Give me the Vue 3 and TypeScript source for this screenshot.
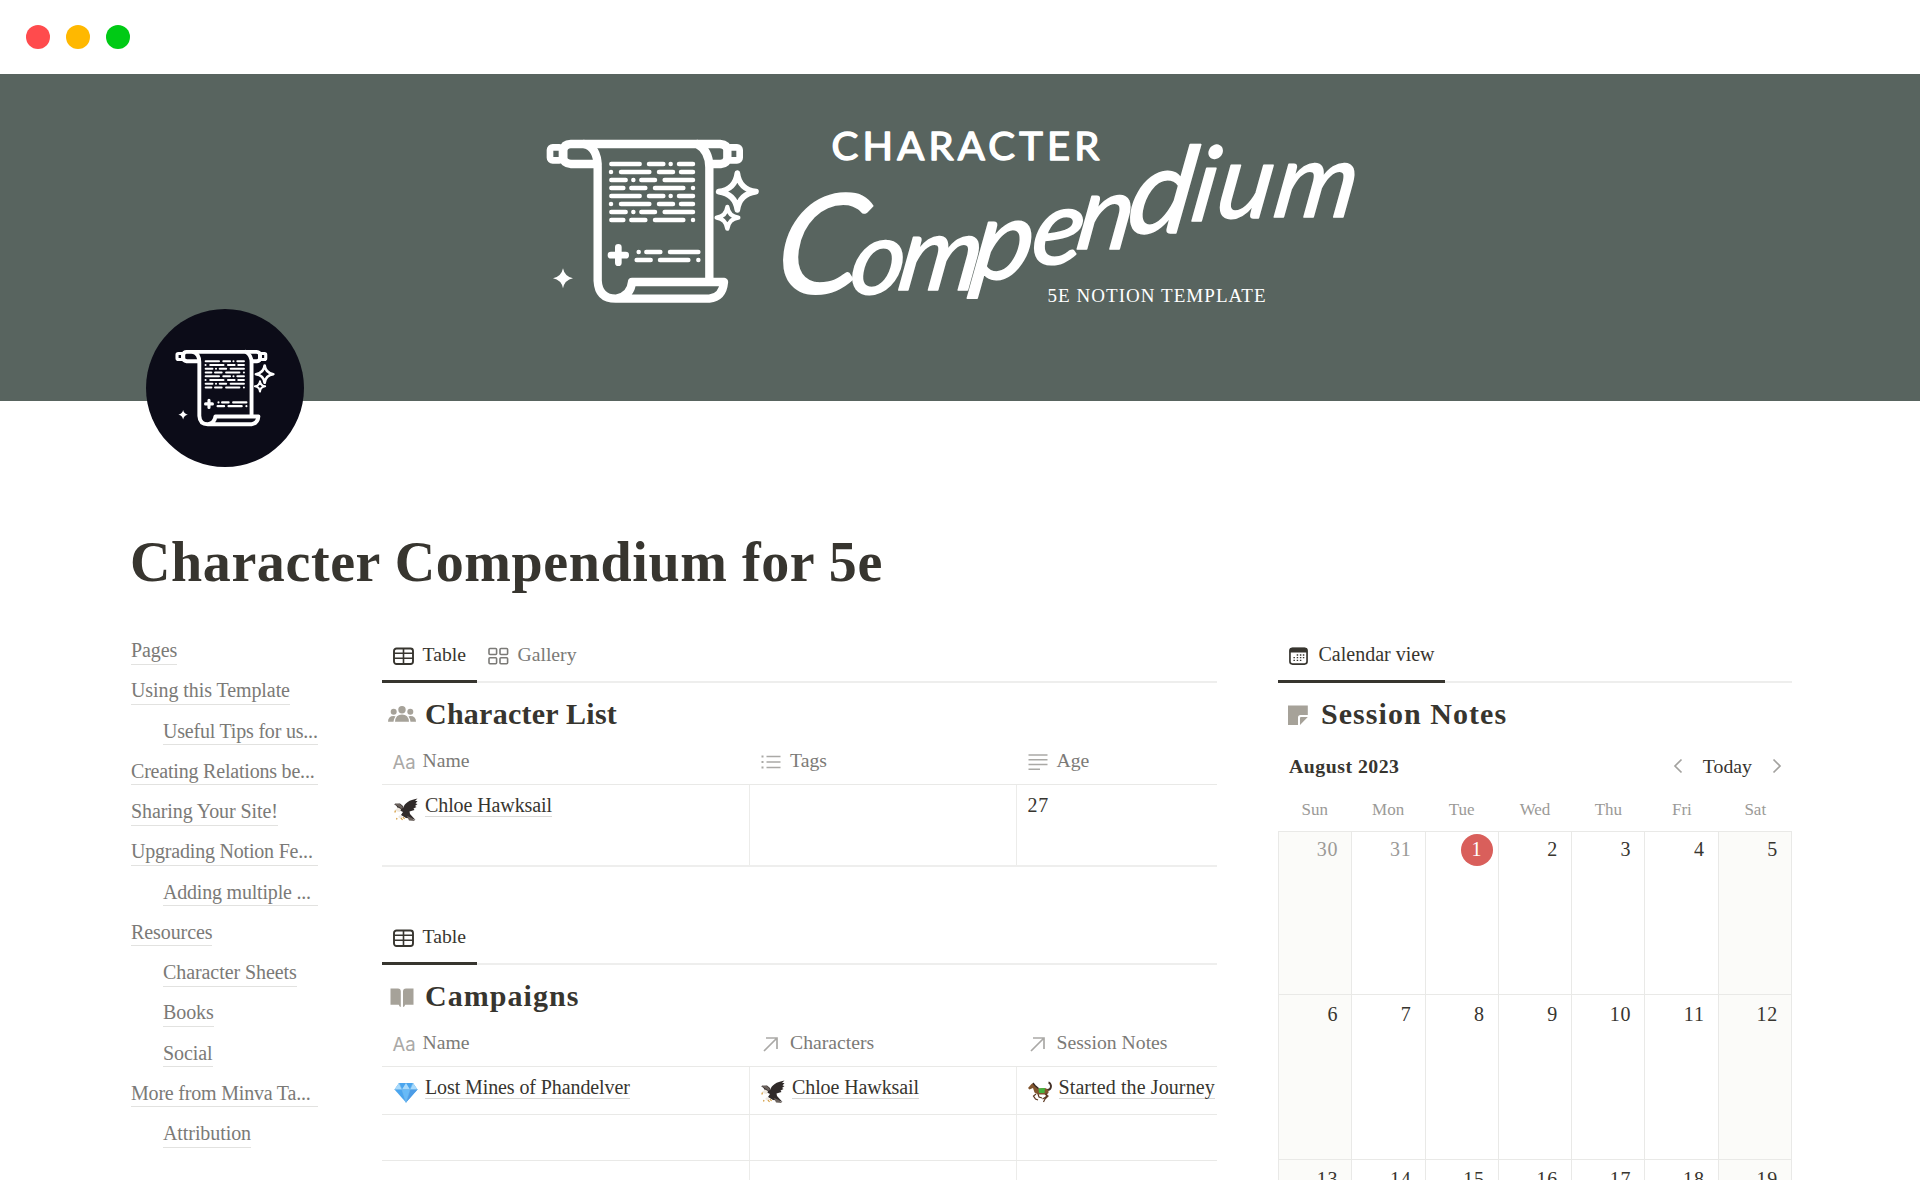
<script setup lang="ts">
interface PageLink {
  label: string
  nested?: boolean
  full?: boolean
}

interface Cell {
  icon?: string
  text?: string
  link?: boolean
}

const pages: PageLink[] = [
  { label: 'Pages' },
  { label: 'Using this Template' },
  { label: 'Useful Tips for us...', nested: true, full: true },
  { label: 'Creating Relations be...', full: true },
  { label: 'Sharing Your Site!' },
  { label: 'Upgrading Notion Fe...', full: true },
  { label: 'Adding multiple ...', nested: true, full: true },
  { label: 'Resources' },
  { label: 'Character Sheets', nested: true },
  { label: 'Books', nested: true },
  { label: 'Social', nested: true },
  { label: 'More from Minva Ta...', full: true },
  { label: 'Attribution', nested: true },
]

const databases = [
  {
    title: 'Character List',
    icon: 'people',
    tabs: ['Table', 'Gallery'],
    columns: [
      { icon: 'title', label: 'Name' },
      { icon: 'list', label: 'Tags' },
      { icon: 'text', label: 'Age' },
    ],
    rows: [
      {
        height: 'tall',
        cells: [{ icon: 'eagle', text: 'Chloe Hawksail', link: true }, {}, { text: '27' }] as Cell[],
      },
    ],
  },
  {
    title: 'Campaigns',
    icon: 'book',
    tabs: ['Table'],
    columns: [
      { icon: 'title', label: 'Name' },
      { icon: 'arrow', label: 'Characters' },
      { icon: 'arrow', label: 'Session Notes' },
    ],
    rows: [
      {
        height: 'mid',
        cells: [
          { icon: 'gem', text: 'Lost Mines of Phandelver', link: true },
          { icon: 'eagle', text: 'Chloe Hawksail', link: true },
          { icon: 'horse', text: 'Started the Journey', link: true },
        ] as Cell[],
      },
      { height: 'short', cells: [{}, {}, {}] as Cell[] },
      { height: 'short', cells: [{}, {}, {}] as Cell[] },
    ],
  },
]

const weekdays = ['Sun', 'Mon', 'Tue', 'Wed', 'Thu', 'Fri', 'Sat']
const weeks = [
  [30, 31, 1, 2, 3, 4, 5],
  [6, 7, 8, 9, 10, 11, 12],
  [13, 14, 15, 16, 17, 18, 19],
]
</script>

<template>
  <div class="window">
    <svg class="defs" width="0" height="0" aria-hidden="true">
      <symbol id="scroll" viewBox="0 0 780 630">
        <g fill="none" stroke="#fff" stroke-linecap="round" stroke-linejoin="round">
          <rect x="90" y="112" width="36" height="39" rx="8" stroke-width="20" />
          <rect x="623" y="112" width="36" height="39" rx="8" stroke-width="20" />
          <path stroke-width="25" d="M232 162H152Q130 158 130 143V121Q132 102 152 102H600Q622 104 622 121V143Q622 160 602 162H570" />
          <path stroke-width="25" d="M192 102Q233 112 233 170V512Q236 566 287 566H568Q608 562 612 516H336Q333 556 290 566" />
          <path stroke-width="25" d="M532 102Q568 122 568 172V514" />
          <g stroke-width="13.5">
            <path d="M274 162H359M387 162H430M452 162h.1M477 162H519M273 186h.1M303 186H388M417 186H459M483 186H519M274 210H317M340 210h.1M364 210H405M434 210H519M274 234H310M334 234H376M405 234H490M519 234h.1" />
            <path d="M274 258H359M387 258H430M452 258h.1M477 258H519M273 282h.1M303 282H388M417 282H459M483 282H519M274 306H317M340 306h.1M364 306H405M434 306H519M274 330H310M334 330H376M405 330H490M519 330h.1" />
            <path d="M356 426h.1M379 426H421M450 426H535M350 450H392M420 450H505M535 450h.1" />
          </g>
          <path stroke-width="20" d="M295 412V458M273 435.500H317" />
          <path stroke-width="17" d="M652 189Q658 238 708 245Q658 252 652 300Q646 252 596 245Q646 238 652 189Z" />
          <path stroke-width="13" d="M622 291Q626 319 655 323Q626 327 622 356Q618 327 590 323Q618 319 622 291Z" />
        </g>
        <path fill="#fff" d="M129 475Q134 500 159 505Q134 510 129 535Q124 510 99 505Q124 500 129 475Z" />
      </symbol>
      <symbol id="table" viewBox="0 0 21 18">
        <rect x="1" y="1.500" width="19" height="15.500" rx="2.500" fill="none" stroke="currentColor" stroke-width="1.900" />
        <path d="M1 6.300H20M1 11.300H20M10.500 2V17" stroke="currentColor" stroke-width="1.600" />
      </symbol>
      <symbol id="gallery" viewBox="0 0 21 18">
        <g fill="none" stroke="currentColor" stroke-width="1.600">
          <rect x="1" y="1.500" width="7.600" height="6" rx="1" />
          <rect x="12" y="1.500" width="7.600" height="6" rx="1" />
          <rect x="1" y="10.800" width="7.600" height="6" rx="1" />
          <rect x="12" y="10.800" width="7.600" height="6" rx="1" />
        </g>
      </symbol>
      <symbol id="calendar" viewBox="0 0 18 18">
        <rect x=".9" y="1.300" width="16.200" height="15.800" rx="2.500" fill="none" stroke="currentColor" stroke-width="1.600" />
        <path d="M.8 5.500V3Q.8.700 3 .7H15Q17.200.7 17.200 3V5.500Z" fill="currentColor" />
        <path d="M7.300 8h1.400M10.300 8h1.400M13.100 8h1.400M4.200 10.700h1.400M7.300 10.700h1.400M10.300 10.700h1.400M13.100 10.700h1.400M4.200 13.400h1.400M7.300 13.400h1.400M10.300 13.400h1.400" stroke="currentColor" stroke-width="1.300" />
      </symbol>
      <symbol id="people" viewBox="0 0 28 20">
        <g fill="#a6a299">
          <circle cx="14" cy="5.700" r="3.700" /><circle cx="5.700" cy="7.700" r="3" /><circle cx="22.300" cy="7.700" r="3" />
          <path d="M7 17.800Q7.500 10.600 14 10.600T21 17.800Z" />
          <path d="M0 17.800Q0 12 5.700 12Q7 12 7.500 12.500Q5.600 15 5.500 17.800Z" />
          <path d="M28 17.800Q28 12 22.300 12Q21 12 20.500 12.500Q22.400 15 22.500 17.800Z" />
        </g>
      </symbol>
      <symbol id="book" viewBox="0 0 24 20">
        <path fill="#a6a299" d="M.5 1.500H8Q10.800 1.500 10.800 4.500V20Q9.500 20 8.800 17.800H.5ZM23.500 1.500H16Q13 1.500 13 4.500V20Q14.500 20 15.200 17.800H23.500Z" />
      </symbol>
      <symbol id="note" viewBox="0 0 20 20">
        <path fill="#a6a299" d="M0 .5H19.800V10H12.500Q10 10 10 12.500V20H0ZM12 20V13Q12 11.900 13 11.900H19.800Z" />
      </symbol>
      <symbol id="list" viewBox="0 0 20 16">
        <path d="M5.500 2.500H19.500M5.500 8H19.500M5.500 13.500H19.500" stroke="#aaa9a6" stroke-width="1.500" />
        <path d="M.5 2.500h2M.5 8h2M.5 13.500h2" stroke="#aaa9a6" stroke-width="2" />
      </symbol>
      <symbol id="text" viewBox="0 0 20 16">
        <path d="M.5 1H19.500M.5 5.800H19.500M.5 10.600H19.500M.5 15.200H12" stroke="#aaa9a6" stroke-width="1.500" />
      </symbol>
      <symbol id="arrow" viewBox="0 0 20 16">
        <path d="M3 15L16 2M5 2H16V13" fill="none" stroke="#aaa9a6" stroke-width="1.700" />
      </symbol>
      <symbol id="eagle" viewBox="0 0 24 24">
        <path fill="#302a29" d="M9 10C11 5 15 2 23.500.5L21 3L23.500 3L21.500 5.500L23.500 6L21 8L22.500 9L19.500 10.500L20.500 12L15.500 13.500L16 16L21.500 22L17 20.500L12 20L7 17L9 14L5 12L2.500 8L0 6L6 5.500L9 8Z" />
        <path fill="#6b625d" d="M1 5.500L6 6L9 9L8 11L5 9L1 6.500ZM13 18L18 20L21 23L15 22.500Z" />
        <path fill="#eee8df" d="M1 12L4 9.500L7 11L6 14L3 13.500ZM4 19L6 17L9 19L7 21Z" />
        <path d="M1.500 12.500L.8 14.500M3 20L2.500 21.500M7 20L8.500 22M9 19L10.500 21" stroke="#d49b3c" stroke-width="1.200" />
      </symbol>
      <symbol id="gem" viewBox="0 0 24 24">
        <path fill="#4aa5ee" d="M5 3H19L23.500 9.500L12 22.500L.5 9.500Z" />
        <path fill="#a9dafb" d="M5 3L8 9.500L.5 9.500ZM19 3L16 9.500L23.500 9.500ZM8 9.500L12 3L16 9.500Z" />
        <path fill="#67baf7" d="M8 9.500H16L12 22.500Z" />
        <path fill="#4c9ce6" d="M16 9.500H23.500L12 22.500Z" />
        <path d="M.5 9.500H23.500M5 3L8 9.500L12 22.500L16 9.500L19 3" fill="none" stroke="#73b9ec" stroke-width=".6" />
      </symbol>
      <symbol id="horse" viewBox="0 0 24 24">
        <path d="M19 10Q23 10 23 6Q22.500 3 20.500 2.500" fill="none" stroke="#443026" stroke-width="1.900" />
        <path fill="#81552e" d="M0 8L3.500 4L5.500 3L6.500 5L10.500 8.500L17 8Q21 9 20.500 13L17.500 14.500L10 14.500L6.500 12.500L5 8L1.500 9.500Z" />
        <path d="M8 14L5.500 16L7.500 19L10 20M10 14L11 17L14 18M17 14L20 16L17 19L15.500 22M19 13L18 17L14.500 19" fill="none" stroke="#5b3922" stroke-width="1.200" />
        <path fill="#44b43e" d="M10.500 8.500L17 8L16.500 13L11 13Z" />
        <path d="M5 3L7 5.500L10.500 8.500" fill="none" stroke="#332620" stroke-width="1.300" />
      </symbol>
    </svg>

    <header class="titlebar">
      <span class="dot red"></span><span class="dot amber"></span><span class="dot green"></span>
    </header>

    <section class="cover">
      <svg class="banner" width="1920" height="327" viewBox="0 74 1920 327">
        <use href="#scroll" x="520" y="110" width="260" height="210" />
        <text class="kicker" x="831.500" y="160" textLength="272" lengthAdjust="spacingAndGlyphs">CHARACTER</text>
        <g transform="translate(0 250) skewX(-9) translate(0 -250)">
          <text
            class="script"
            x="778 854 902 974 1031 1074 1122 1184 1209 1266"
            y="293 294 290 279 264 249 233 221 218 217"
          ><tspan class="initial">C</tspan>om<tspan class="loop">p</tspan><tspan class="bowl">e</tspan>n<tspan class="ascender">d</tspan>ium</text>
        </g>
        <text class="tagline" x="1047.500" y="302" textLength="218" lengthAdjust="spacing">5E NOTION TEMPLATE</text>
      </svg>
      <div class="avatar">
        <svg width="121.600" height="98.200"><use href="#scroll" width="121.600" height="98.200" /></svg>
      </div>
    </section>

    <h1>Character Compendium for 5e</h1>

    <main>
      <nav>
        <div v-for="page in pages" :key="page.label" class="page" :class="{ nested: page.nested }">
          <a :class="{ full: page.full }">{{ page.label }}</a>
        </div>
      </nav>

      <div class="databases">
        <section v-for="db in databases" :key="db.title" class="database">
          <div class="tabs">
            <div v-for="(tab, i) in db.tabs" :key="tab" class="tab" :class="{ active: i === 0 }">
              <svg width="21" height="18"><use :href="'#' + tab.toLowerCase()" /></svg>
              <span>{{ tab }}</span>
            </div>
          </div>
          <h2>
            <svg v-if="db.icon === 'people'" class="people" width="28" height="20"><use href="#people" /></svg>
            <svg v-else class="book" width="24" height="20"><use href="#book" /></svg>
            <span :class="{ roomy: db.icon === 'book' }">{{ db.title }}</span>
          </h2>
          <div class="grid head">
            <div v-for="col in db.columns" :key="col.label" class="th">
              <span v-if="col.icon === 'title'" class="aa">Aa</span>
              <svg v-else width="20" height="16"><use :href="'#' + col.icon" /></svg>
              <span>{{ col.label }}</span>
            </div>
          </div>
          <div v-for="(row, r) in db.rows" :key="r" class="grid row" :class="row.height">
            <div v-for="(cell, c) in row.cells" :key="c" class="td">
              <svg v-if="cell.icon" width="24" height="24"><use :href="'#' + cell.icon" /></svg>
              <a v-if="cell.link">{{ cell.text }}</a>
              <span v-else-if="cell.text" class="num">{{ cell.text }}</span>
            </div>
          </div>
        </section>
      </div>

      <section class="notes">
        <div class="tabs">
          <div class="tab active">
            <svg width="19" height="18" viewBox="0 0 18 18" preserveAspectRatio="none"><use href="#calendar" width="18" height="18" /></svg>
            <span>Calendar view</span>
          </div>
        </div>
        <h2>
          <svg class="note" width="20" height="20"><use href="#note" /></svg>
          <span class="roomy">Session Notes</span>
        </h2>
        <div class="monthbar">
          <strong>August 2023</strong>
          <svg width="10" height="16" viewBox="0 0 10 16"><path d="M8.500 1.500L2 8L8.500 14.500" /></svg>
          <span>Today</span>
          <svg width="10" height="16" viewBox="0 0 10 16"><path d="M1.500 1.500L8 8L1.500 14.500" /></svg>
        </div>
        <div class="weekdays">
          <span v-for="d in weekdays" :key="d">{{ d }}</span>
        </div>
        <div class="month">
          <div v-for="(week, w) in weeks" :key="w" class="week">
            <div v-for="(day, d) in week" :key="day" class="day" :class="{ weekend: d % 6 === 0, muted: w === 0 && day > 20 }">
              <span :class="{ today: day === 1 }">{{ day }}</span>
            </div>
          </div>
        </div>
      </section>
    </main>
  </div>
</template>

<style>
body {
  margin: 0;
  background: #fff;
}
</style>

<style scoped>
* {
  box-sizing: border-box;
}
.window {
  width: 1920px;
  height: 1180px;
  overflow: hidden;
  background: #fff;
  color: #37352f;
  font-family: "Liberation Serif", serif;
  font-size: 20px;
  display: flex;
  flex-direction: column;
}
svg {
  flex: none;
  display: block;
}
.defs {
  position: absolute;
}
.titlebar {
  height: 74px;
  flex: none;
  display: flex;
  gap: 16px;
  padding: 25px 0 0 26px;
}
.dot {
  width: 24px;
  height: 24px;
  border-radius: 50%;
}
.red { background: #ff4b4d; }
.amber { background: #ffb800; }
.green { background: #00ca15; }
.cover {
  position: relative;
  height: 327px;
  flex: none;
  background: #58645f;
}
.banner text {
  fill: #fff;
}
.banner .kicker {
  font: 400 38px Lato, sans-serif;
  letter-spacing: 4px;
  stroke: #fff;
  stroke-width: 1.400;
  stroke-linejoin: round;
}
.banner .script {
  font: italic 400 104px Lato, sans-serif;
  stroke: #fff;
  stroke-width: 1.600;
  stroke-linejoin: round;
}
.banner .initial { font-size: 138px; }
.banner .loop { font-size: 112px; }
.banner .bowl { font-size: 106px; }
.banner .ascender { font-size: 120px; }
.banner .tagline {
  font: 19px "Liberation Serif", serif;
}
.avatar {
  position: absolute;
  left: 146px;
  top: 235px;
  width: 158px;
  height: 158px;
  border-radius: 50%;
  background: #0c0c18;
  padding: 27px 0 0 17px;
}
h1 {
  margin: 129px 0 0 130px;
  height: 107px;
  flex: none;
  font-size: 56px;
  line-height: 64px;
  letter-spacing: .6px;
  white-space: nowrap;
}
main {
  display: flex;
  align-items: flex-start;
  padding-left: 131px;
}
nav {
  width: 187px;
  margin-right: 64px;
  color: #7b7a77;
}
.page {
  height: 40.270px;
}
.page.nested {
  padding-left: 32px;
}
.page a {
  display: inline-block;
  line-height: 26px;
  height: 27.500px;
  border-bottom: 1.500px solid #e2e2e0;
  letter-spacing: -.08px;
  white-space: nowrap;
}
.page a.full {
  display: block;
  letter-spacing: -.2px;
}
.databases {
  width: 835px;
  margin-right: 61px;
}
.database {
  height: 282px;
}
.tabs {
  display: flex;
  height: 46px;
  border-bottom: 2px solid #eeeeed;
}
.tab {
  display: flex;
  height: 46px;
  padding: 5px 11px 0;
  color: #7b7a77;
  font-size: 19.700px;
  line-height: 24px;
  white-space: nowrap;
}
.tab svg {
  margin: 4.500px 8.500px 0 0;
}
.tab.active {
  color: #37352f;
  border-bottom: 3px solid #37352f;
}
h2 {
  display: flex;
  margin: 10.500px 0 0;
  height: 40px;
  font-size: 30px;
  line-height: 40px;
  letter-spacing: .25px;
}
h2 .roomy { letter-spacing: 1.050px; }
h2 .people { margin: 10.500px 9px 0 6px; }
h2 .book { margin: 11.500px 11px 0 8px; }
h2 .note { margin: 11.500px 13px 0 10px; }
.grid {
  display: grid;
  grid-template-columns: 367px 266.500px 201.500px;
}
.head {
  height: 50.500px;
  color: #7b7a77;
}
.th {
  display: flex;
  padding: 14px 0 0 12px;
  font-size: 19.700px;
  line-height: 24px;
}
.th svg {
  margin: 6px 9px 0 0;
}
.aa {
  width: 22px;
  margin: 2px 8px 0 -1.500px;
  font-family: Inter, sans-serif;
  font-size: 18.500px;
  color: #aaa9a6;
}
.row {
  border-top: 1.500px solid #e9e9e7;
}
.tall {
  height: 83px;
  border-bottom: 2px solid #eeeeed;
}
.mid { height: 48px; }
.short { height: 45.500px; }
.td {
  display: flex;
  padding: 10px 0 0 12px;
  line-height: 20px;
  white-space: nowrap;
}
.td + .td {
  border-left: 1.500px solid #ececea;
  padding-left: 11px;
}
.td svg {
  margin: 3px 7px 0 0;
}
.td a {
  height: 21.500px;
  border-bottom: 1.500px solid #d9d9d7;
  letter-spacing: -.1px;
}
.td:nth-child(3) a {
  letter-spacing: .1px;
}
.num {
  letter-spacing: .8px;
}
.notes {
  width: 514px;
}
.notes .tab {
  width: 167px;
  font-size: 20px;
}
.notes .tab svg {
  margin-right: 10.500px;
}
.monthbar {
  display: flex;
  align-items: center;
  height: 24px;
  margin-top: 20.500px;
  padding: 0 10px 0 11px;
  font-size: 19.800px;
  line-height: 24px;
}
.monthbar strong {
  margin-right: auto;
  letter-spacing: .5px;
}
.monthbar span {
  margin: 0 20px;
}
.monthbar path {
  fill: none;
  stroke: #a3a29f;
  stroke-width: 1.700;
}
.weekdays {
  display: grid;
  grid-template-columns: repeat(7, 1fr);
  height: 53px;
  padding-top: 22px;
  text-align: center;
  color: #9b9a97;
  font-size: 17px;
  line-height: 20px;
}
.month {
  border-left: 1px solid #e9e9e7;
}
.week {
  display: grid;
  grid-template-columns: repeat(7, 1fr);
  height: 165px;
  border-top: 1.500px solid #e9e9e7;
}
.week:first-child {
  height: 163px;
}
.day {
  border-right: 1.500px solid #e9e9e7;
  padding: 6px 13px 0 0;
  line-height: 26px;
  text-align: right;
  letter-spacing: .8px;
}
.week:first-child .day {
  padding-top: 2px;
  line-height: 30px;
}
.weekend { background: #fbfbf9; }
.muted { color: #9b9a97; }
.week .today {
  display: block;
  width: 32px;
  height: 32px;
  margin: 0 -8px 0 auto;
  border-radius: 50%;
  background: #d95f5b;
  color: #fff;
  text-align: center;
}
</style>
